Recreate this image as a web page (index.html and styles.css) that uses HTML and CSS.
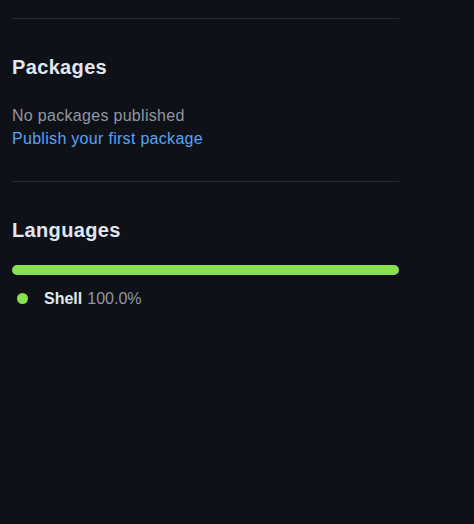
FILE: index.html
```html
<!DOCTYPE html>
<html lang="en">
<head>
    <meta charset="UTF-8">
    <meta name="viewport" content="width=device-width, initial-scale=1.0">
    <title>Repository sidebar</title>
    <link rel="stylesheet" href="styles.css">
</head>
<body>
    <div class="sidebar">
        <div class="section">
            <h2>Packages</h2>
            <p class="muted">No packages published</p>
            <a href="#" class="link">Publish your first package</a>
        </div>
        <div class="section">
            <h2>Languages</h2>
            <div class="lang-bar">
                <span class="lang-fill" style="width: 100%"></span>
            </div>
            <ul class="lang-list">
                <li>
                    <span class="lang-dot"></span>
                    <span class="lang-name">Shell</span>
                    <span class="lang-percent">100.0%</span>
                </li>
            </ul>
        </div>
    </div>
</body>
</html>
```

FILE: styles.css
```css
body {
    margin: 0;
    padding: 0;
    background-color: #0e1118;
    font-family: "Liberation Sans", Arial, sans-serif;
    color: #e1e7ee;
}
.sidebar {
    width: 387px;
    margin-left: 12px;
    padding-top: 18px;
}
.section {
    border-top: 1px solid #252a33;
    padding-top: 36px;
    padding-bottom: 31px;
}
.section h2 {
    margin: 0;
    font-size: 20px;
    line-height: 24px;
    font-weight: bold;
    letter-spacing: 0.35px;
    color: #e1e7ee;
}
.muted {
    margin: 25px 0 0;
    font-size: 16px;
    line-height: 23px;
    letter-spacing: 0.3px;
    color: #9198a1;
}
.link {
    display: block;
    font-size: 16px;
    line-height: 23px;
    letter-spacing: 0.3px;
    color: #58a3f5;
    text-decoration: none;
}
.lang-bar {
    margin-top: 23px;
    height: 10px;
    border-radius: 5px;
    background: #262c36;
    overflow: hidden;
    display: flex;
}
.lang-fill {
    background-color: #89e051;
    height: 100%;
}
.lang-list {
    list-style: none;
    margin: 12px 0 0;
    padding: 0;
}
.lang-list li {
    display: flex;
    align-items: center;
    font-size: 16px;
    line-height: 23px;
    padding-left: 5px;
}
.lang-dot {
    width: 11px;
    height: 11px;
    border-radius: 50%;
    background-color: #89e051;
    margin-right: 16px;
}
.lang-name {
    font-weight: bold;
    color: #e1e7ee;
    margin-right: 5px;
}
.lang-percent {
    color: #9198a1;
}
```
